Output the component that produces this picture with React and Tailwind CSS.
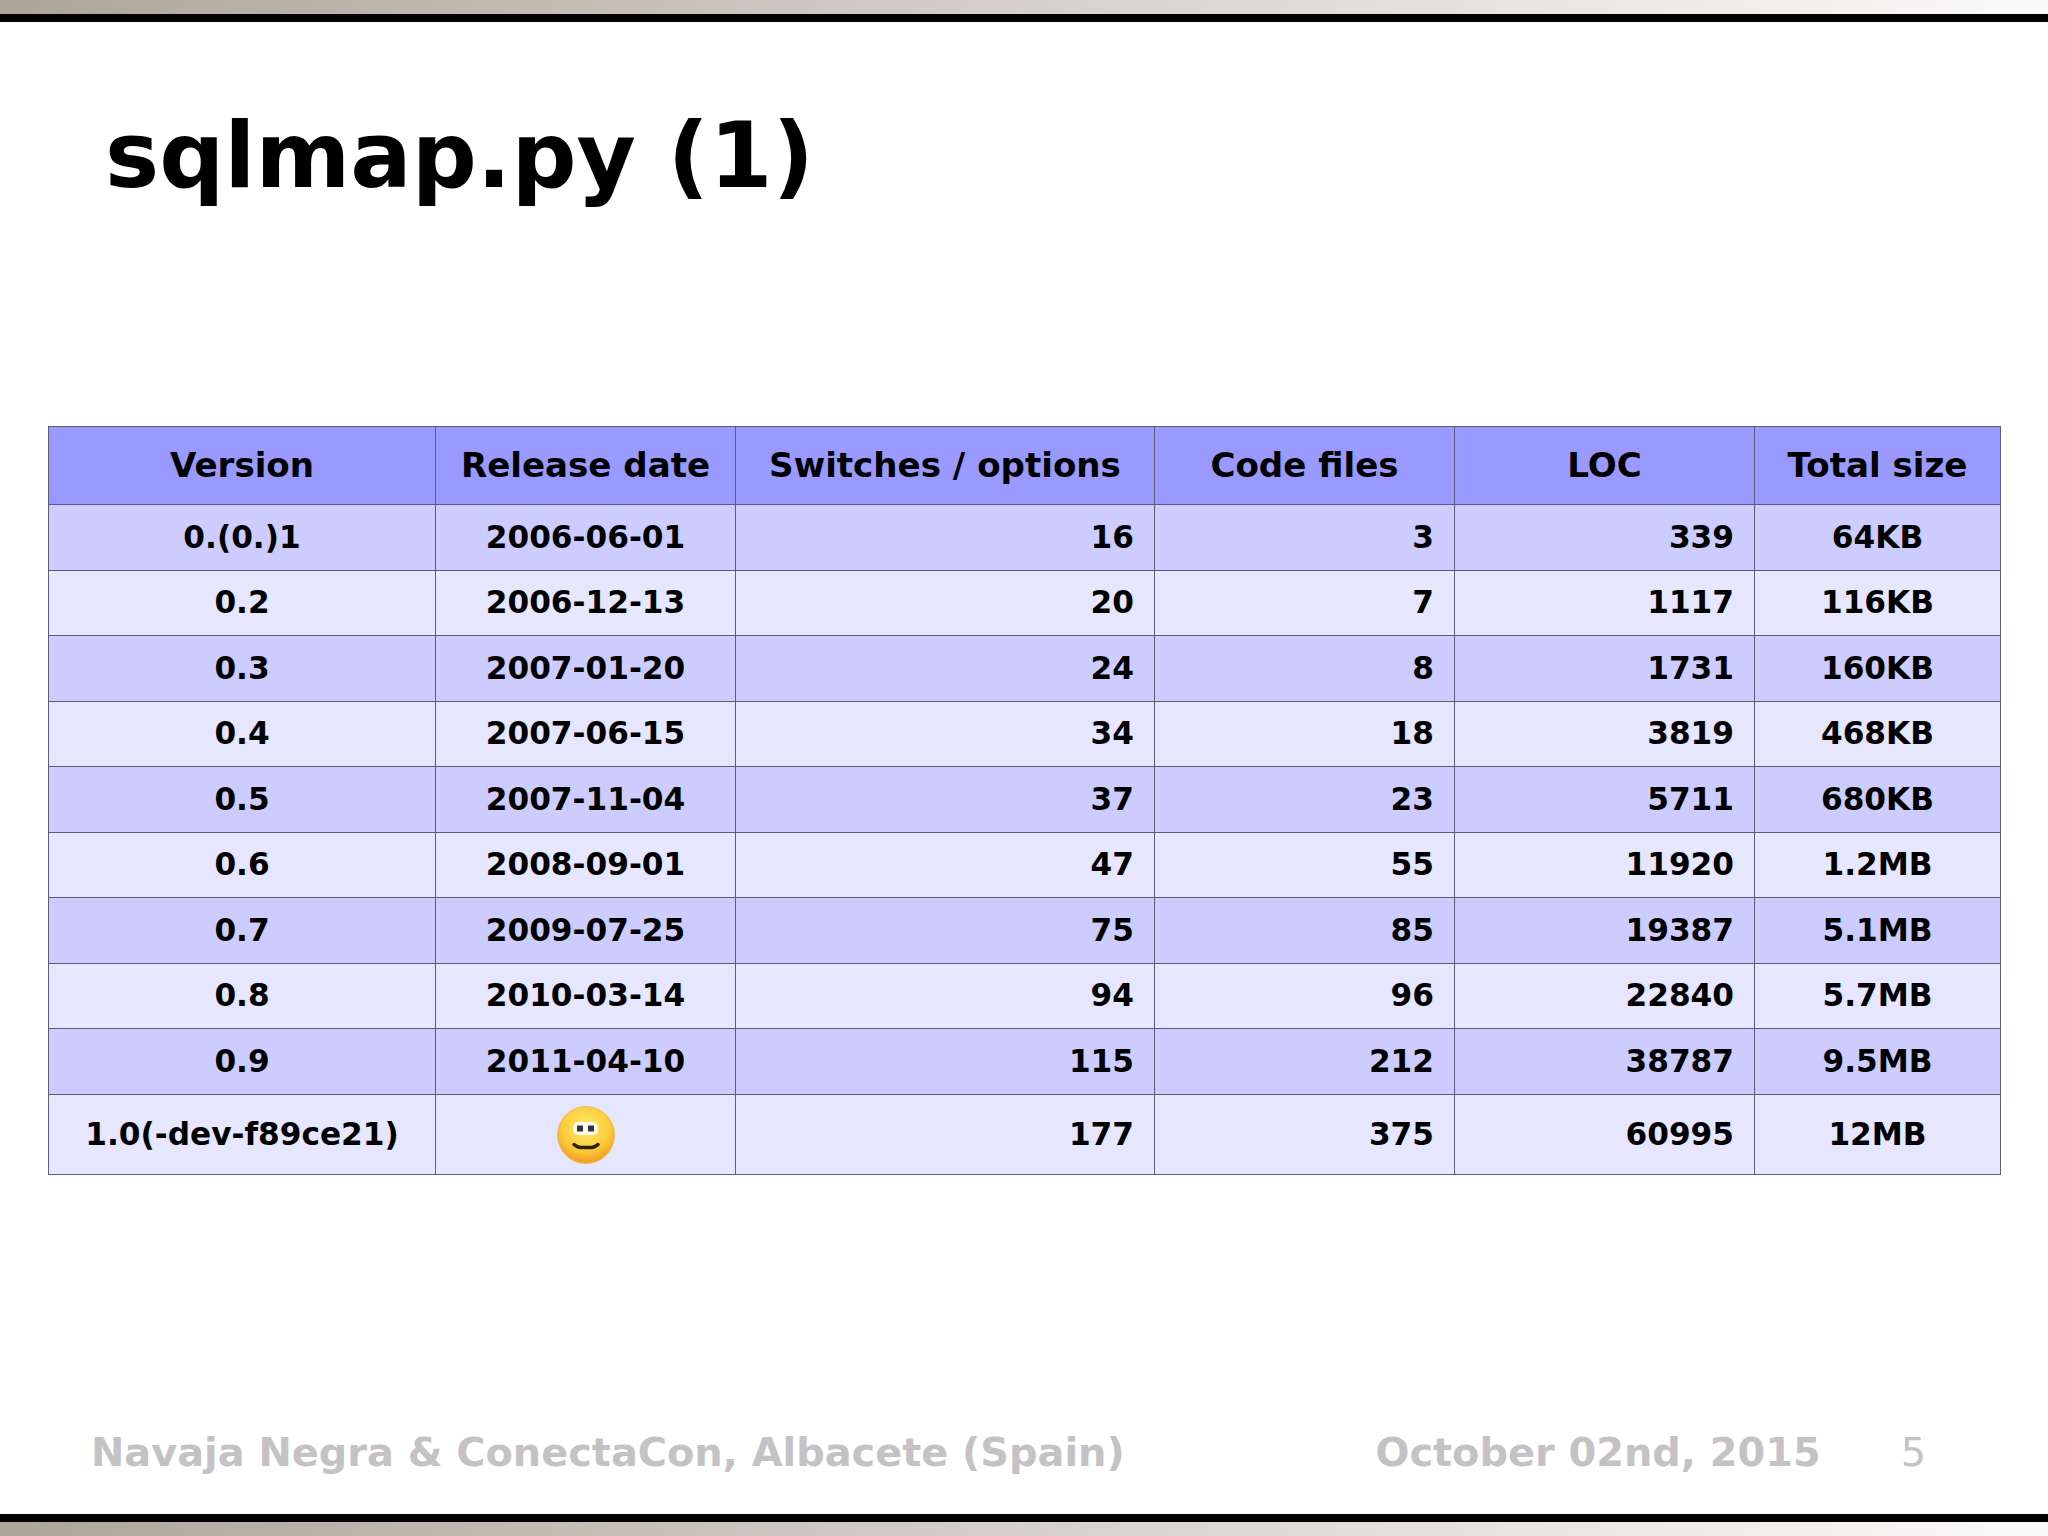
import React from 'react';

const font = { fontFamily: '"DejaVu Sans", sans-serif' };

const rows = [
    ['0.(0.)1', '2006-06-01', '16', '3', '339', '64KB'],
    ['0.2', '2006-12-13', '20', '7', '1117', '116KB'],
    ['0.3', '2007-01-20', '24', '8', '1731', '160KB'],
    ['0.4', '2007-06-15', '34', '18', '3819', '468KB'],
    ['0.5', '2007-11-04', '37', '23', '5711', '680KB'],
    ['0.6', '2008-09-01', '47', '55', '11920', '1.2MB'],
    ['0.7', '2009-07-25', '75', '85', '19387', '5.1MB'],
    ['0.8', '2010-03-14', '94', '96', '22840', '5.7MB'],
    ['0.9', '2011-04-10', '115', '212', '38787', '9.5MB'],
    ['1.0(-dev-f89ce21)', null, '177', '375', '60995', '12MB'],
];

const headers = ['Version', 'Release date', 'Switches / options', 'Code files', 'LOC', 'Total size'];

const Smiley = () => (
    <svg width="60" height="60" viewBox="0 0 60 60" className="mx-auto block translate-y-[1px]">
        <defs>
            <radialGradient id="face" cx="50%" cy="36%" r="64%">
                <stop offset="0%" stopColor="#fdeb6c" />
                <stop offset="65%" stopColor="#fccb3a" />
                <stop offset="100%" stopColor="#f29c1e" />
            </radialGradient>
        </defs>
        <circle cx="30" cy="30" r="28.5" fill="url(#face)" stroke="#f0bb62" strokeWidth="1" />
        <rect x="17" y="17" width="25" height="13" rx="5" fill="#fffbe6" />
        <rect x="21" y="20.5" width="6" height="6" fill="#35304a" />
        <rect x="32" y="20.5" width="6" height="6" fill="#35304a" />
        <path d="M18 39.5 Q20 41.5 24 42.5 L36 42.5 Q40 41.5 42 39.5" fill="none" stroke="#2a2206" strokeWidth="3.5" strokeLinecap="round" />
    </svg>
);

const Strip = () => <div className="h-[14px] bg-gradient-to-r from-[#aca69a] via-[#d5d0ca] to-[#fbfafa]" />;

export default function App() {
    return (
        <div className="w-[2048px] h-[1536px] bg-white flex flex-col text-black overflow-hidden" style={font}>
            <Strip />
            <div className="h-[8px] bg-black" />

            <h1 className="pl-[105px] pt-[68px] text-[91px] leading-[132px] font-bold whitespace-nowrap">sqlmap.py (1)</h1>

            {/* Table */}
            <div className="pl-[48px] pt-[204px]">
                <table className="table-fixed border-collapse w-[1952px] text-[31.2px] font-bold">
                    <colgroup>
                        <col className="w-[387px]" />
                        <col className="w-[300px]" />
                        <col className="w-[419px]" />
                        <col className="w-[300px]" />
                        <col className="w-[300px]" />
                        <col className="w-[246px]" />
                    </colgroup>
                    <thead>
                        <tr className="h-[78px] bg-[#9999ff] text-[34.1px]">
                            {headers.map((h) => (
                                <th key={h} className="border border-[#5c5c78] text-center font-bold whitespace-nowrap">{h}</th>
                            ))}
                        </tr>
                    </thead>
                    <tbody>
                        {rows.map((r, i) => (
                            <tr key={r[0]} className={`${i === 9 ? 'h-[80px]' : 'h-[65.5px]'} ${i % 2 === 0 ? 'bg-[#ccccff]' : 'bg-[#e6e6ff]'}`}>
                                <td className="border border-[#5c5c78] text-center whitespace-nowrap">{r[0]}</td>
                                <td className="border border-[#5c5c78] text-center">{r[1] || <Smiley />}</td>
                                <td className="border border-[#5c5c78] text-right pr-[20px]">{r[2]}</td>
                                <td className="border border-[#5c5c78] text-right pr-[20px]">{r[3]}</td>
                                <td className="border border-[#5c5c78] text-right pr-[20px]">{r[4]}</td>
                                <td className="border border-[#5c5c78] text-center">{r[5]}</td>
                            </tr>
                        ))}
                    </tbody>
                </table>
            </div>

            {/* Footer */}
            <div className="mt-auto flex items-center h-[60px] mb-[31px] text-[39.85px] text-[#c4c2c4]">
                <span className="ml-[91px] font-bold whitespace-nowrap">Navaja Negra &amp; ConectaCon, Albacete (Spain)</span>
                <span className="ml-auto font-bold whitespace-nowrap">October 02nd, 2015</span>
                <span className="ml-[80px] mr-[122px]">5</span>
            </div>

            <div className="h-[8px] bg-black" />
            <Strip />
        </div>
    );
}
